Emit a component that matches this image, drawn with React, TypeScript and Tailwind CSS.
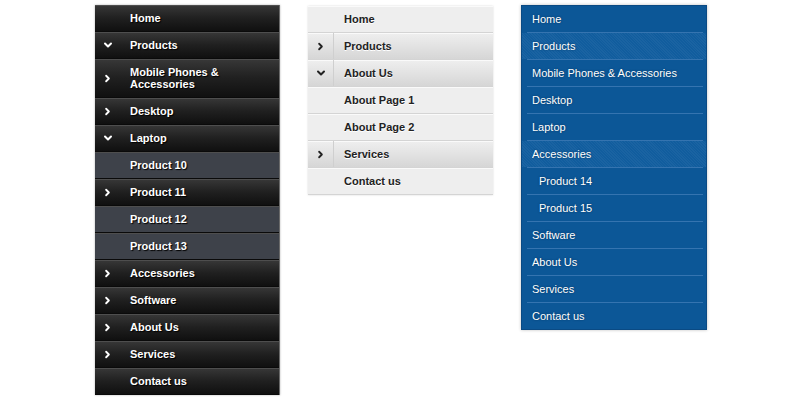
import React from "react";
import { ChevronRight, ChevronDown } from "lucide-react";

type Item = { label: string; icon?: "right" | "down"; sub?: boolean; tall?: boolean };

const darkItems: Item[] = [
  { label: "Home" },
  { label: "Products", icon: "down" },
  { label: "Mobile Phones & Accessories", icon: "right", tall: true },
  { label: "Desktop", icon: "right" },
  { label: "Laptop", icon: "down" },
  { label: "Product 10", sub: true },
  { label: "Product 11", icon: "right" },
  { label: "Product 12", sub: true },
  { label: "Product 13", sub: true },
  { label: "Accessories", icon: "right" },
  { label: "Software", icon: "right" },
  { label: "About Us", icon: "right" },
  { label: "Services", icon: "right" },
  { label: "Contact us" },
];

const grayItems: Item[] = [
  { label: "Home" },
  { label: "Products", icon: "right" },
  { label: "About Us", icon: "down" },
  { label: "About Page 1" },
  { label: "About Page 2" },
  { label: "Services", icon: "right" },
  { label: "Contact us" },
];

const blueItems: { label: string; sub?: boolean; active?: boolean }[] = [
  { label: "Home" },
  { label: "Products", active: true },
  { label: "Mobile Phones & Accessories" },
  { label: "Desktop" },
  { label: "Laptop" },
  { label: "Accessories", active: true },
  { label: "Product 14", sub: true },
  { label: "Product 15", sub: true },
  { label: "Software" },
  { label: "About Us" },
  { label: "Services" },
  { label: "Contact us" },
];

const Arrow = ({ dir, color }: { dir?: "right" | "down"; color: string }) => {
  if (!dir) return null;
  return dir === "right" ? (
    <ChevronRight size={11} strokeWidth={4} color={color} />
  ) : (
    <ChevronDown size={12} strokeWidth={4} color={color} />
  );
};

const DarkMenu = () => (
  <div className="w-[185px] mt-[5px] border-r border-[#6a6a6a] shadow-[0_0_2px_rgba(0,0,0,0.3)]">
    {darkItems.map((item, i) => (
      <div
        key={i}
        className={`flex items-center border-b border-[#0a0a0a] shadow-[inset_0_1px_0_#4e4e4e] ${
          item.tall ? "h-[39px]" : "h-[27px]"
        } ${item.sub ? "bg-[#3e424a]" : "bg-gradient-to-b from-[#383838] via-[#202020] to-[#101010]"}`}
      >
        <div className="w-[25px] shrink-0 h-full flex items-center justify-center">
          <Arrow dir={item.icon} color="#ffffff" />
        </div>
        <span className="ml-[10px] pr-[20px] text-[11px] leading-[12px] font-bold text-white [text-shadow:1px_1px_1px_#000]">
          {item.label}
        </span>
      </div>
    ))}
  </div>
);

const GrayMenu = () => (
  <div className="w-[185px] mt-[6px] shadow-[0_0_2px_rgba(0,0,0,0.15)]">
    {grayItems.map((item, i) => (
      <div
        key={i}
        className={`flex items-center h-[27px] border-b border-[#d4d4d4] shadow-[inset_0_1px_0_#fafafa] ${
          item.icon ? "bg-gradient-to-b from-[#efefef] to-[#d6d6d6]" : "bg-[#eeeeee]"
        }`}
      >
        <div
          className={`w-[26px] shrink-0 h-full flex items-center justify-center ${
            item.icon ? "border-r border-[#cfcfcf]" : ""
          }`}
        >
          <Arrow dir={item.icon} color="#222222" />
        </div>
        <span className="ml-[10px] text-[11px] font-bold text-[#222222] [text-shadow:0_1px_0_#ffffff]">
          {item.label}
        </span>
      </div>
    ))}
  </div>
);

const BlueMenu = () => (
  <div className="w-[186px] mt-[5px] bg-[#0c5797] border border-[#0a4a84] shadow-[0_0_3px_rgba(0,0,0,0.25)]">
    {blueItems.map((item, i) => (
      <div key={i}>
        <div
          className={`flex items-center h-[26px] ${
            item.active
              ? "bg-[#115d9e] bg-[repeating-linear-gradient(45deg,rgba(255,255,255,0.04)_0_1px,transparent_1px_2px)]"
              : ""
          }`}
        >
          <span
            className={`text-[11px] text-white [text-shadow:0_0_2px_#06345e] ${
              item.sub ? "pl-[17px]" : "pl-[10px]"
            }`}
          >
            {item.label}
          </span>
        </div>
        {i < blueItems.length - 1 && <div className="h-px ml-[5px] mr-[3px] bg-[#3574b0]" />}
      </div>
    ))}
  </div>
);

const App: React.FC = () => (
  <div className="w-[800px] h-[400px] bg-white flex items-start gap-[28px] pl-[95px] font-['Liberation_Sans',Arial,sans-serif]">
    <DarkMenu />
    <GrayMenu />
    <BlueMenu />
  </div>
);

export default App;
